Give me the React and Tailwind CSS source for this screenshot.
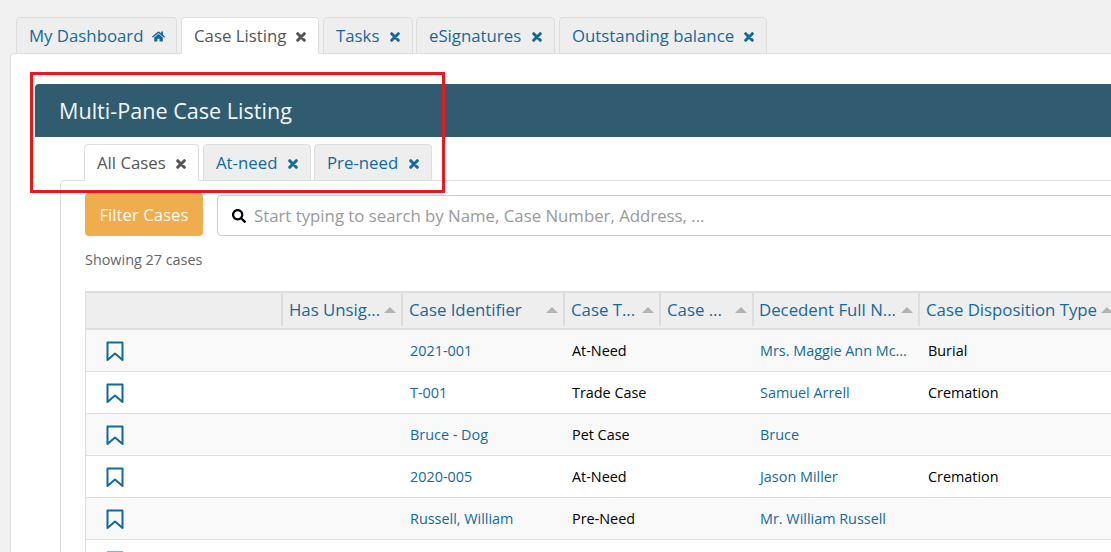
import React from 'react';
import { FaHome, FaSearch } from 'react-icons/fa';

const topTabs = [
  { label: 'My Dashboard', home: true, w: 'w-[161px]' },
  { label: 'Case Listing', active: true, w: 'w-[138px]' },
  { label: 'Tasks', w: 'w-[90px] -mr-px' },
  { label: 'eSignatures', w: 'w-[139px]' },
  { label: 'Outstanding balance', w: 'w-[208px]' },
];

const subTabs = [
  { label: 'All Cases', active: true, w: 'w-[115px]' },
  { label: 'At-need', w: 'w-[108px] -mr-px' },
  { label: 'Pre-need', w: 'w-[118px]' },
];

const cols = [
  { label: '', w: 'w-[197px]', pl: 'pl-[6px]' },
  { label: 'Has Unsig...', w: 'w-[120px]', pl: 'pl-[6px]' },
  { label: 'Case Identifier', w: 'w-[162px]', pl: 'pl-[6px]' },
  { label: 'Case T...', w: 'w-[96px]', pl: 'pl-[6px]' },
  { label: 'Case ...', w: 'w-[93px]', pl: 'pl-[6px]' },
  { label: 'Decedent Full N...', w: 'w-[166px]', pl: 'pl-[5px]' },
  { label: 'Case Disposition Type', w: 'w-[200px]', pl: 'pl-[6px]' },
];

const rows = [
  { id: '2021-001', type: 'At-Need', name: 'Mrs. Maggie Ann Mc...', disp: 'Burial' },
  { id: 'T-001', type: 'Trade Case', name: 'Samuel Arrell', disp: 'Cremation' },
  { id: 'Bruce - Dog', type: 'Pet Case', name: 'Bruce', disp: '' },
  { id: '2020-005', type: 'At-Need', name: 'Jason Miller', disp: 'Cremation' },
  { id: 'Russell, William', type: 'Pre-Need', name: 'Mr. William Russell', disp: '' },
  { id: '', type: '', name: '', disp: '' },
];

function CloseIcon() {
  return (
    <svg width="10" height="10" viewBox="0 0 10 10" fill="none" stroke="currentColor" strokeWidth="3" strokeLinecap="round" className="mt-[1px] shrink-0">
      <path d="M1.700 1.700l6.600 6.600M8.300 1.700l-6.600 6.600" />
    </svg>
  );
}

function Tab({ tab }) {
  return (
    <div
      className={`${tab.w} h-[37px] -mb-px shrink-0 flex items-center justify-between pl-[12px] ${tab.home ? 'pr-[11px]' : 'pr-[12px]'} pt-[1px] rounded-t-[4px] border border-[#dddddd] text-[16.8px] ${
        tab.active ? 'bg-white border-b-white text-[#555555] relative z-10' : 'bg-[#eeeeee] text-[#14699b]'
      }`}
    >
      <span>{tab.label}</span>
      {tab.home ? <FaHome className="text-[13px]" /> : <CloseIcon />}
    </div>
  );
}

function BookmarkIcon() {
  return (
    <svg width="18" height="21" viewBox="0 0 18 21" fill="none" stroke="#14699b" strokeWidth="2">
      <path d="M1.5 1.5h15v17.500l-7.500-6.500-7.500 6.500z" strokeLinejoin="round" />
    </svg>
  );
}

function Row({ row, odd }) {
  return (
    <div className={`flex h-[42px] items-center border-b border-[#dddddd] text-[14.4px] ${odd ? 'bg-[#f9f9f9]' : 'bg-white'}`}>
      <div className="w-[197px] shrink-0 pl-[20px] pt-[2px] flex items-center"><BookmarkIcon /></div>
      <div className="w-[120px] shrink-0" />
      <div className="w-[162px] shrink-0 pl-[7px] text-[#14699b]">{row.id}</div>
      <div className="w-[96px] shrink-0 pl-[7px] text-black">{row.type}</div>
      <div className="w-[93px] shrink-0" />
      <div className="w-[166px] shrink-0 pl-[6px] text-[#14699b] whitespace-nowrap">{row.name}</div>
      <div className="w-[200px] shrink-0 pl-[8px] text-black">{row.disp}</div>
    </div>
  );
}

export default function App() {
  return (
    <div className="relative h-[552px] w-[1111px] overflow-hidden bg-[#f1f1f1] font-['Open_Sans',sans-serif]">
      {/* Top tabs */}
      <div className="flex gap-[4px] pl-[16px] pt-[17px] relative z-10">
        {topTabs.map((t) => <Tab key={t.label} tab={t} />)}
      </div>

      {/* Main panel */}
      <div className="ml-[10px] w-[1200px] h-[600px] bg-white border border-[#dddddd] rounded-tl-[4px] pl-[24px] pt-[30px]">
        <div className="h-[53px] pt-[2px] bg-[#315c70] rounded-tl-[4px] flex items-center pl-[24px] text-[21.6px] text-[#f2f6f8]">
          Multi-Pane Case Listing
        </div>

        <div className="flex gap-[4px] pl-[49px] pt-[7px] relative z-10">
          {subTabs.map((t) => <Tab key={t.label} tab={t} />)}
        </div>

        {/* Inner panel */}
        <div className="ml-[25px] h-[500px] border border-[#dddddd] rounded-tl-[4px] pl-[24px] pt-[12px]">
          <div className="flex items-start gap-[14px]">
            <button className="w-[118px] h-[43px] shrink-0 bg-[#f0ad4e] rounded-[4px] text-[16.8px] text-[#fef8ee]">Filter Cases</button>
            <div className="mt-[2px] w-[1000px] h-[41px] shrink-0 border border-[#cccccc] rounded-[4px] flex items-center pl-[14px] gap-[8px] text-[16.8px] text-[#999999]">
              <FaSearch className="text-[14px] text-black" />
              <span>Start typing to search by Name, Case Number, Address, ...</span>
            </div>
          </div>

          <div className="mt-[14px] h-[20px] leading-[20px] text-[14.4px] text-[#666666]">Showing 27 cases</div>

          {/* Table */}
          <div className="mt-[21px] border-l-2 border-[#dddddd]">
            <div className="flex h-[39px] pb-[2px] -ml-[1px] bg-[#eeeeee] border-t-2 border-b-2 border-[#dddddd] text-[16.8px] text-[#14699b]">
              {cols.map((c) => (
                <div key={c.label} className={`${c.w} ${c.pl} shrink-0 flex items-center justify-between pr-[5px] border-r-2 border-[#dddddd] whitespace-nowrap`}>
                  <span>{c.label}</span>
                  {c.label && <span className="w-0 h-0 border-x-[6px] border-x-transparent border-b-[6px] border-b-[#b3b3b3]" />}
                </div>
              ))}
            </div>
            <div className="-ml-[1px]">
              {rows.map((r, i) => <Row key={i} row={r} odd={i % 2 === 0} />)}
            </div>
          </div>
        </div>
      </div>

      {/* Red annotation box */}
      <div className="absolute left-[30px] top-[72px] w-[415px] h-[121px] border-[3px] border-[#e8181f] z-20 pointer-events-none" />
    </div>
  );
}
